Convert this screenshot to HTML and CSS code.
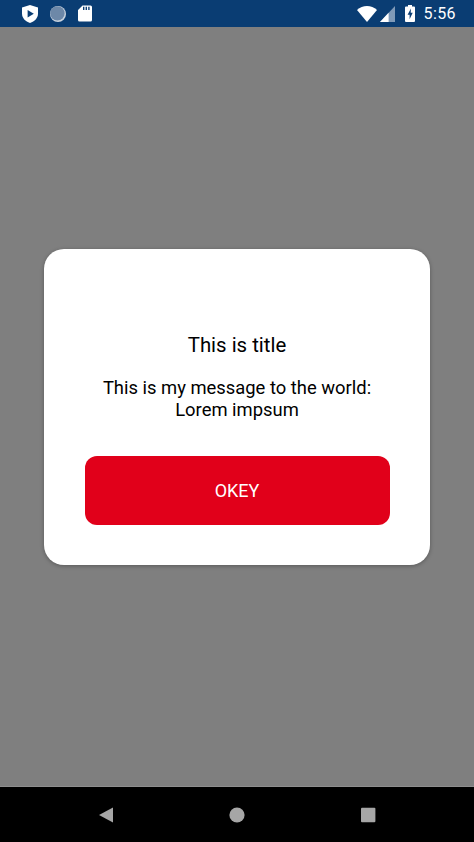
FILE: index.html
```html
<!DOCTYPE html>
<html lang="en">
<head>
<meta charset="utf-8">
<title>Dialog</title>
<link rel="stylesheet" href="styles.css">
</head>
<body>
<div class="screen">
  <header class="status">
    <div class="status-left">
      <svg class="ic-shield" viewBox="0 0 16 18"><path fill="#fff" d="M8 0 L16 2.6 V8.5 C16 13 12.6 16.5 8 18 C3.4 16.5 0 13 0 8.5 V2.6 Z"/><path fill="#0a3d73" d="M5.6 5 L11.8 8.8 L5.6 12.6 Z"/></svg>
      <svg class="ic-circle" viewBox="0 0 16 16"><circle cx="8" cy="8" r="8" fill="#c9d3df"/><circle cx="7.4" cy="7.4" r="7.2" fill="#6d88a8"/></svg>
      <svg class="ic-sd" viewBox="0 0 14 16"><path fill="#fff" d="M4.5 0 H12.5 A1.5 1.5 0 0 1 14 1.5 V14.5 A1.5 1.5 0 0 1 12.5 16 H1.5 A1.5 1.5 0 0 1 0 14.5 V4.5 Z"/><path fill="#0a3d73" d="M5 1.2h1.4v3.4H5zM7.6 1.2H9v3.4H7.6zM10.200 1.2h1.4v3.4h-1.4z"/></svg>
    </div>
    <div class="status-right">
      <svg class="ic-wifi" viewBox="0 0 20 16"><path fill="#fff" d="M0 4 C5.600 -1.300 14.400 -1.300 20 4 L10 16 Z"/></svg>
      <svg class="ic-signal" viewBox="0 0 15 16"><path fill="#7f9ab8" d="M15 0 V16 H0 Z"/><path fill="#fff" d="M8.600 6.800 V16 H0 Z"/></svg>
      <svg class="ic-battery" viewBox="0 0 10 17"><path fill="#fff" d="M3 0h4v1.5h2a1 1 0 0 1 1 1V16a1 1 0 0 1-1 1H1a1 1 0 0 1-1-1V2.500a1 1 0 0 1 1-1h2z"/><path fill="#0a3d73" d="M5.900 3.400 L2.600 9.800 H4.600 V14.200 L7.700 7.800 H5.700 Z"/></svg>
      <span class="clock">5:56</span>
    </div>
  </header>
  <main class="scrim">
    <section class="dialog">
      <h1 class="title">This is title</h1>
      <p class="message">This is my message to the world:<br>Lorem impsum</p>
      <button class="okay">OKEY</button>
    </section>
  </main>
  <nav class="navbar">
    <svg class="nav-ic" viewBox="0 0 16 16"><path fill="#a6a6a6" d="M15 .5 V15.500 L1 8 Z"/></svg>
    <svg class="nav-ic" viewBox="0 0 16 16"><circle cx="8" cy="8" r="7.600" fill="#a6a6a6"/></svg>
    <svg class="nav-ic" viewBox="0 0 16 16"><rect x="1" y=".7" width="14.400" height="14.600" rx="1" fill="#a6a6a6"/></svg>
  </nav>
</div>
</body>
</html>
```
FILE: styles.css
```css
* { box-sizing: border-box; }
html, body { margin: 0; padding: 0; }
.screen {
  width: 474px;
  height: 842px;
  display: flex;
  flex-direction: column;
  font-family: Roboto, "Liberation Sans", sans-serif;
  overflow: hidden;
}
.status {
  height: 27px;
  flex: none;
  background: #0a3d73;
  display: flex;
  justify-content: space-between;
  align-items: center;
  padding: 0 18px 0 22px;
}
.status-left, .status-right { display: flex; align-items: center; }
.ic-shield { width: 16px; height: 18px; }
.ic-circle { width: 16px; height: 16px; margin-left: 12px; }
.ic-sd { width: 14px; height: 17px; margin-left: 12px; }
.ic-wifi { width: 20px; height: 16px; }
.ic-signal { width: 15px; height: 16px; margin-left: 3px; }
.ic-battery { width: 10px; height: 17px; margin-left: 10px; }
.clock { color: #fff; font-size: 16px; margin-left: 9px; letter-spacing: 0.4px; }
.scrim {
  flex: 1;
  background: #7f7f7f;
  border-bottom: 1px solid #8e8e8e;
  display: flex;
  flex-direction: column;
  padding: 222px 44px 0;
}
.dialog {
  height: 316px;
  background: #fff;
  border-radius: 20px;
  box-shadow: 0 1px 4px rgba(0, 0, 0, .3);
  display: flex;
  flex-direction: column;
  align-items: center;
  padding: 84px 41px 0 41px;
  color: #000;
}
.title { margin: 0; font-size: 20.400px; font-weight: 400; line-height: 24px; }
.message { margin: 20px 0 0; font-size: 18.400px; line-height: 21.500px; text-align: center; white-space: nowrap; }
.okay {
  margin-top: 36px;
  width: 305px;
  height: 69px;
  flex: none;
  border: 0;
  border-radius: 12px;
  background: #e1001a;
  color: #fff;
  font: 400 18px Roboto, "Liberation Sans", sans-serif;
}
.navbar {
  height: 55px;
  flex: none;
  background: #000;
  display: flex;
  justify-content: space-between;
  align-items: center;
  padding: 0 98px;
}
.nav-ic { width: 16px; height: 16px; }
```
